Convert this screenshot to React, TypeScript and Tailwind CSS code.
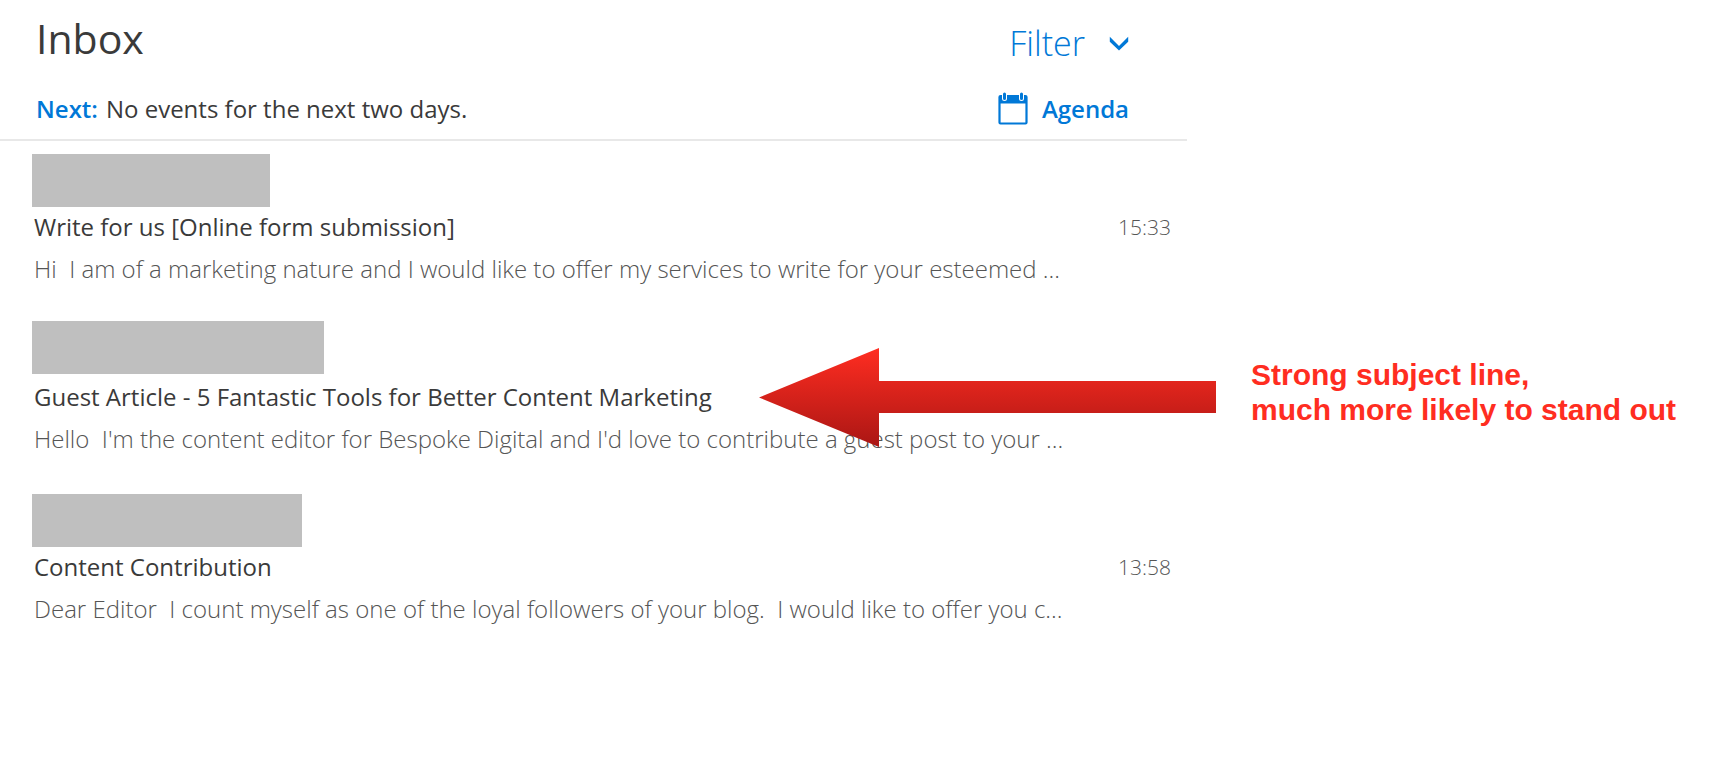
type Message = {
  subject: string;
  preview: string;
  time?: string;
  senderWidth: string;
  senderAlign: string;
  highlighted?: boolean;
};

const messages: Message[] = [
  {
    subject: "Write for us [Online form submission]",
    preview:
      "Hi  I am of a marketing nature and I would like to offer my services to write for your esteemed ...",
    time: "15:33",
    senderWidth: "w-[238px]",
    senderAlign: "items-end",
  },
  {
    subject: "Guest Article - 5 Fantastic Tools for Better Content Marketing",
    preview:
      "Hello  I'm the content editor for Bespoke Digital and I'd love to contribute a guest post to your ...",
    senderWidth: "w-[292px]",
    senderAlign: "items-start",
    highlighted: true,
  },
  {
    subject: "Content Contribution",
    preview:
      "Dear Editor  I count myself as one of the loyal followers of your blog.  I would like to offer you c...",
    time: "13:58",
    senderWidth: "w-[270px]",
    senderAlign: "items-end",
  },
];

function CalendarIcon() {
  return (
    <svg width="30" height="33" viewBox="0 0 30 33" fill="none" aria-hidden="true">
      <rect x="1.5" y="4" width="27" height="27.5" rx="1" stroke="#0078d7" strokeWidth="2.2" />
      <path d="M1 4h28v7.5H1z" fill="#0078d7" />
      <path d="M6.5 2.5v4M23.5 2.5v4" stroke="#fff" strokeWidth="5" strokeLinecap="round" />
      <path d="M6.5 2v4.5M23.5 2v4.5" stroke="#0078d7" strokeWidth="3" strokeLinecap="round" />
    </svg>
  );
}

function ChevronIcon() {
  return (
    <svg width="20" height="15" viewBox="0 0 20 15" fill="none" aria-hidden="true">
      <path d="M0.8 0.8v5L10 14.6l9.2-8.8v-5L10 10z" fill="#0078d7" />
    </svg>
  );
}

function Arrow() {
  return (
    <svg
      className="absolute top-[27px] -right-[29px]"
      width="457"
      height="99"
      viewBox="0 0 457 99"
      aria-hidden="true"
    >
      <defs>
        <linearGradient id="arrow" x1="0" y1="0" x2="0" y2="1">
          <stop offset="0" stopColor="#ff2d21" />
          <stop offset="1" stopColor="#aa1614" />
        </linearGradient>
      </defs>
      <path d="M0 49.5L120 0v33h337v32H120v34z" fill="url(#arrow)" />
    </svg>
  );
}

function MessageRow({ message }: { message: Message }) {
  return (
    <li className="relative h-[170px] pl-8 pr-4">
      <div className={`flex h-[56px] ${message.senderAlign}`}>
        <div className={`h-[53px] bg-[#bfbfbf] ${message.senderWidth}`} />
      </div>
      <div className="flex items-center justify-between pl-[2px] leading-[40px]">
        <h2 className="text-[24px] text-[#3a3a3a]">{message.subject}</h2>
        {message.time && <time className="text-[21px] font-light text-[#555]">{message.time}</time>}
      </div>
      <p className="pl-[2px] text-[24px] leading-[44px] font-light whitespace-pre text-[#555]">
        {message.preview}
      </p>
      {message.highlighted && <Arrow />}
    </li>
  );
}

export default function App() {
  return (
    <div className="grid min-h-screen grid-cols-[1187fr_528fr] bg-white font-['Open_Sans','Noto_Sans',sans-serif]">
      <main className="min-w-0">
        <header className="border-b-2 border-[#e8e8e8] pr-[58px] pl-9">
          <div className="flex h-[80px] items-start justify-between">
            <h1 className="text-[41px] leading-[76px] text-[#3a3a3a]">Inbox</h1>
            <button
              type="button"
              className="flex items-center gap-6 text-[34px] leading-[86px] font-light text-[#0078d7]"
            >
              Filter
              <ChevronIcon />
            </button>
          </div>
          <div className="flex h-[59px] items-center justify-between pb-[2px] text-[24px]">
            <p className="flex gap-2 text-[#3a3a3a]">
              <span className="font-semibold text-[#0078d7]">Next:</span>
              No events for the next two days.
            </p>
            <a href="#agenda" className="flex items-center gap-[14px] font-semibold text-[#0078d7]">
              <CalendarIcon />
              Agenda
            </a>
          </div>
        </header>
        <ul className="pt-[10px]">
          {messages.map((message) => (
            <MessageRow key={message.subject} message={message} />
          ))}
        </ul>
      </main>

      {/* Note beside the highlighted message */}
      <aside className="pt-[357px] pl-16 font-['Liberation_Sans',sans-serif] text-[30px] leading-[35px] font-bold text-[#ff2d21]">
        Strong subject line,
        <br />
        much more likely to stand out
      </aside>
    </div>
  );
}
